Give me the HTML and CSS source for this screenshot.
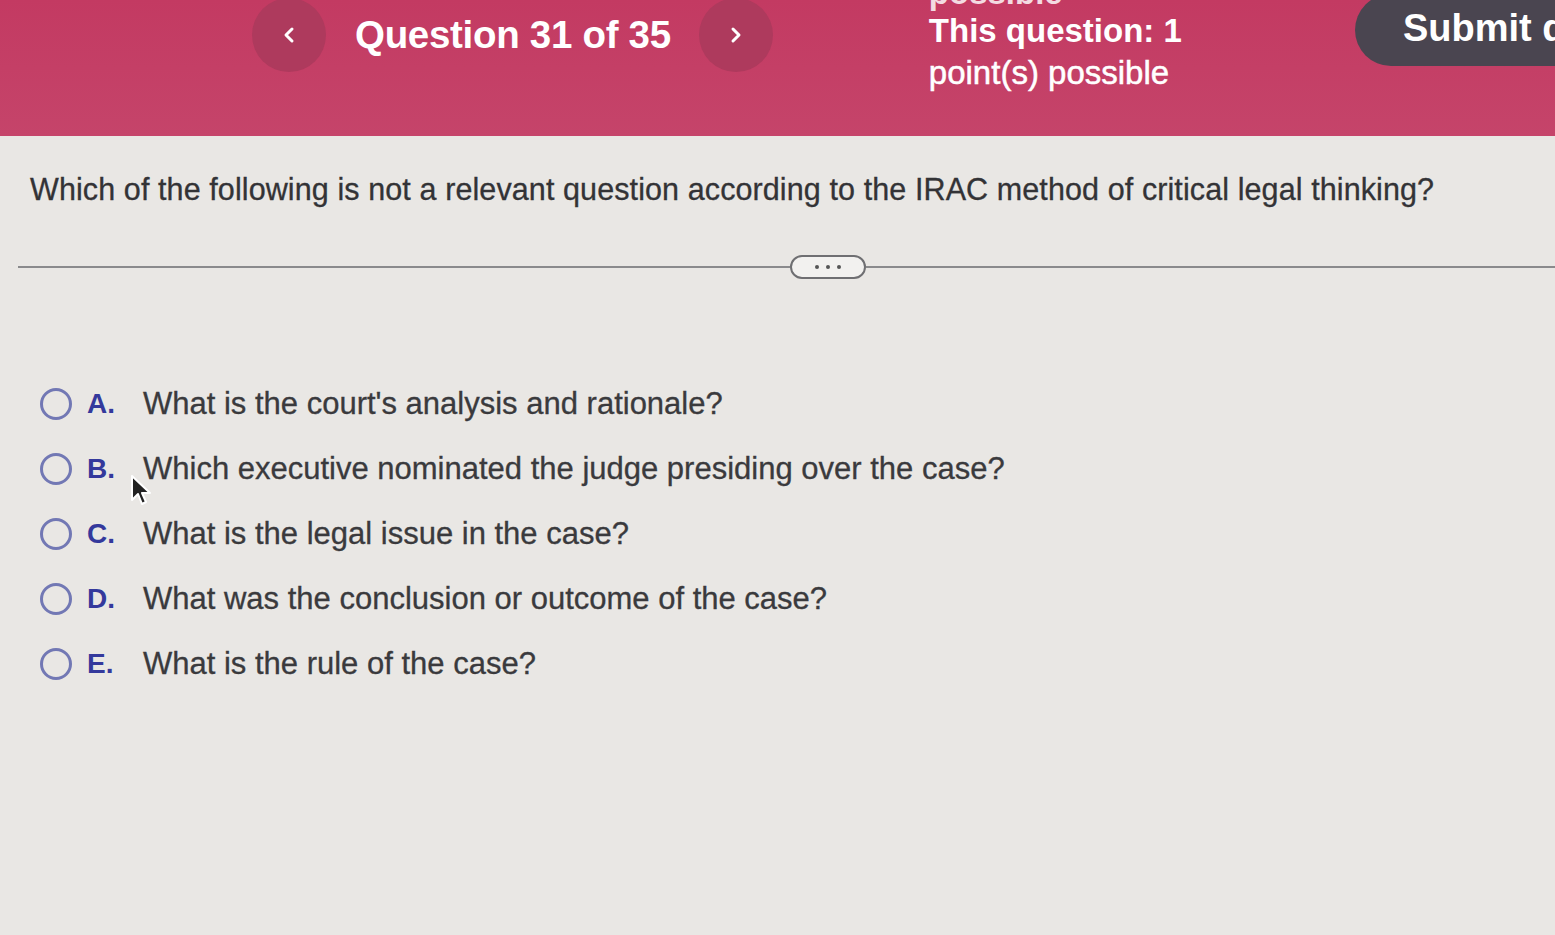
FILE: index.html
```html
<!DOCTYPE html>
<html>
<head>
<meta charset="utf-8">
<link rel="stylesheet" href="styles.css">
</head>
<body>
<header class="topbar">
  <div class="nav">
    <button class="navbtn prev" aria-label="Previous">
      <svg width="16" height="20" viewBox="0 0 16 20"><path d="M11 4 L5 10 L11 16" fill="none" stroke="#fff" stroke-width="3" stroke-linecap="round" stroke-linejoin="round"/></svg>
    </button>
    <h1 class="qtitle">Question 31 of 35</h1>
    <button class="navbtn next" aria-label="Next">
      <svg width="16" height="20" viewBox="0 0 16 20"><path d="M5 4 L11 10 L5 16" fill="none" stroke="#fff" stroke-width="3" stroke-linecap="round" stroke-linejoin="round"/></svg>
    </button>
  </div>
  <div class="info">
    <div class="cut">possible</div>
    <div class="line1">This question: 1</div>
    <div class="line2">point(s) possible</div>
  </div>
  <div class="submit">Submit quiz</div>
</header>
<main class="content">
  <p class="question">Which of the following is not a relevant question according to the IRAC method of critical legal thinking?</p>
  <div class="divider">
    <span class="rule left"></span>
    <span class="more"><i></i><i></i><i></i></span>
    <span class="rule"></span>
  </div>
  <ul class="options">
    <li><span class="radio"></span><span class="letter">A.</span><span class="text">What is the court's analysis and rationale?</span></li>
    <li class="hascursor"><span class="radio"></span><span class="letter">B.</span><span class="text">Which executive nominated the judge presiding over the case?</span>
      <svg class="cursor" width="26" height="36" viewBox="0 0 26 36"><path d="M2 2 L2 26 L8 20 L12 30 L16 28 L12 19 L20 19 Z" fill="#222" stroke="#fff" stroke-width="2" stroke-linejoin="round"/></svg>
    </li>
    <li><span class="radio"></span><span class="letter">C.</span><span class="text">What is the legal issue in the case?</span></li>
    <li><span class="radio"></span><span class="letter">D.</span><span class="text">What was the conclusion or outcome of the case?</span></li>
    <li><span class="radio"></span><span class="letter">E.</span><span class="text">What is the rule of the case?</span></li>
  </ul>
</main>
</body>
</html>
```
FILE: styles.css
```css
html, body {
  margin: 0;
  padding: 0;
}
body {
  background: #e9e7e4;
  font-family: "Liberation Sans", Arial, Helvetica, sans-serif;
  color: #3a3a3c;
  width: 1555px;
  height: 935px;
  overflow: hidden;
}
.topbar {
  height: 136px;
  background: linear-gradient(#c33a62, #c5446a);
  display: flex;
  align-items: flex-start;
  position: relative;
}
.nav {
  display: flex;
  align-items: center;
  margin-left: 252px;
  height: 70px;
}
.navbtn {
  width: 74px;
  height: 74px;
  border-radius: 50%;
  border: none;
  background: #ae3a5d;
  display: flex;
  align-items: center;
  justify-content: center;
  padding: 0;
  flex: none;
}
.qtitle {
  margin: 0 28px 0 29px;
  font-size: 38.5px;
  font-weight: 700;
  color: #fff;
  letter-spacing: -0.3px;
  white-space: nowrap;
}
.info {
  margin-left: 156px;
  margin-top: -15px;
  color: #fff;
  font-size: 33px;
  line-height: 42px;
  white-space: nowrap;
}
.info .cut {
  font-weight: 700;
  color: #f3dbe2;
  height: 16px;
  line-height: 16px;
}
.info .line1 {
  font-weight: 700;
  margin-top: 9px;
}
.info .line2 {
  font-weight: 400;
  -webkit-text-stroke: 0.5px #fff;
}
.submit {
  margin-left: auto;
  width: 200px;
  height: 72px;
  margin-top: -6px;
  background: #4a4550;
  border-radius: 36px 0 0 36px;
  color: #fff;
  font-size: 38px;
  font-weight: 700;
  white-space: nowrap;
  overflow: hidden;
  padding-left: 48px;
  box-sizing: border-box;
  line-height: 68px;
  flex: none;
}
.content {
  padding: 0 0 0 30px;
}
.question {
  margin: 36px 0 0 0;
  font-size: 30.5px;
  color: #333336;
  letter-spacing: 0.1px;
  -webkit-text-stroke: 0.3px #333336;
}
.divider {
  display: flex;
  align-items: center;
  margin: 48px 0 0 -12px;
}
.rule {
  flex: 1;
  height: 2px;
  background: #8a8a8c;
}
.rule.left {
  flex: none;
  width: 772px;
}
.more {
  width: 72px;
  height: 20px;
  border: 2px solid #6f6f72;
  border-radius: 12px;
  background: #f2f1ef;
  display: flex;
  align-items: center;
  justify-content: center;
  gap: 7px;
  flex: none;
}
.more i {
  width: 4px;
  height: 4px;
  border-radius: 50%;
  background: #555;
}
.options {
  list-style: none;
  margin: 92px 0 0 10px;
  padding: 0;
}
.options li {
  display: flex;
  align-items: center;
  height: 65px;
  position: relative;
}
.radio {
  width: 32px;
  height: 32px;
  border: 3px solid #7278b4;
  border-radius: 50%;
  box-sizing: border-box;
  flex: none;
  margin-right: 15px;
}
.letter {
  width: 56px;
  font-size: 28px;
  font-weight: 700;
  color: #34399c;
  flex: none;
}
.text {
  font-size: 31px;
  color: #3a3a3d;
  -webkit-text-stroke: 0.3px #3a3a3d;
}
.cursor {
  position: absolute;
  left: 90px;
  top: 38px;
}
```
